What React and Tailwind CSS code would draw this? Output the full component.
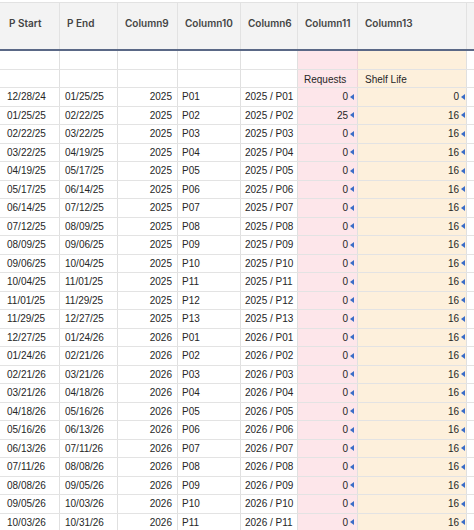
import React from "react";

const starts = ["12/28/24","01/25/25","02/22/25","03/22/25","04/19/25","05/17/25","06/14/25","07/12/25","08/09/25","09/06/25","10/04/25","11/01/25","11/29/25","12/27/25","01/24/26","02/21/26","03/21/26","04/18/26","05/16/26","06/13/26","07/11/26","08/08/26","09/05/26","10/03/26","10/31/26"];

const rows = starts.slice(0, 24).map((s, i) => {
  const year = i < 13 ? 2025 : 2026;
  const p = i < 13 ? i + 1 : i - 12;
  const pp = "P" + String(p).padStart(2, "0");
  return {
    start: s,
    end: starts[i + 1],
    year,
    p: pp,
    yp: `${year} / ${pp}`,
    req: i === 1 ? 25 : 0,
    shelf: i === 0 ? 0 : 16,
  };
});

function Marker() {
  return (
    <svg width="4" height="6" viewBox="0 0 4 6" className="ml-[2px] shrink-0">
      <path d="M4 0 L0 3 L4 6 Z" fill="#3a6cc8" />
    </svg>
  );
}

const font = { fontFamily: '"Liberation Sans", Arial, sans-serif' };

function Cell({ w, className = "", children }) {
  return (
    <div className={`h-full flex items-center shrink-0 border-r border-[#e0e0e0] ${w} ${className}`}>
      {children}
    </div>
  );
}

function Row({ children }) {
  return <div className="flex h-[18.5px] border-b border-[#e3e3e3]">{children}</div>;
}

export default function App() {
  const headers = ["P Start", "P End", "Column9", "Column10", "Column6", "Column11", "Column13"];
  const widths = ["w-[60px]", "w-[58px]", "w-[60px]", "w-[63px]", "w-[57px]", "w-[60px]", "w-[109px]"];
  return (
    <div className="w-[474px] h-[530px] overflow-hidden bg-white text-[10px] text-[#262626]" style={font}>
      <div className="h-[3px] border-b border-[#e2e2e2]" />
      <div className="flex h-[48px] bg-[#f3f3f3] border-b-2 border-[#5a6886]">
        {headers.map((h, i) => (
          <div
            key={h}
            className={`h-full shrink-0 border-r border-[#e2e2e2] pt-[13px] ${widths[i]} ${i === 0 ? "pl-[9px]" : "pl-[7px]"} font-semibold text-[#444]`}
            style={{ fontFamily: 'Inter, "Liberation Sans", sans-serif' }}
          >
            {h}
          </div>
        ))}
        <div className="flex-1" />
      </div>
      {[0, 1].map((k) => (
        <Row key={"e" + k}>
          <Cell w="w-[60px]" />
          <Cell w="w-[58px]" />
          <Cell w="w-[60px]" />
          <Cell w="w-[63px]" />
          <Cell w="w-[57px]" />
          <Cell w="w-[60px]" className="bg-[#fde6ea] border-[#f0d4d8] pl-[6px] pt-[2px]">
            {k === 1 ? "Requests" : ""}
          </Cell>
          <Cell w="w-[109px]" className="bg-[#fdf0dc] border-[#dcdcdc] pl-[7px] pt-[2px]">
            {k === 1 ? "Shelf Life" : ""}
          </Cell>
          <div className="flex-1" />
        </Row>
      ))}
      {rows.map((r) => (
        <Row key={r.start}>
          <Cell w="w-[60px]" className="pl-[7px]">{r.start}</Cell>
          <Cell w="w-[58px]" className="pl-[5px]">{r.end}</Cell>
          <Cell w="w-[60px]" className="justify-end pr-[5px]">{r.year}</Cell>
          <Cell w="w-[63px]" className="pl-[4px]">{r.p}</Cell>
          <Cell w="w-[57px]" className="pl-[4px]">{r.yp}</Cell>
          <Cell w="w-[60px]" className="justify-end pr-[3px] bg-[#fde6ea] border-[#d9e2f3]">
            {r.req}
            <Marker />
          </Cell>
          <Cell w="w-[109px]" className="justify-end pr-[1px] bg-[#fdf0dc] border-[#dcdcdc]">
            {r.shelf}
            <Marker />
          </Cell>
          <div className="flex-1" />
        </Row>
      ))}
    </div>
  );
}
